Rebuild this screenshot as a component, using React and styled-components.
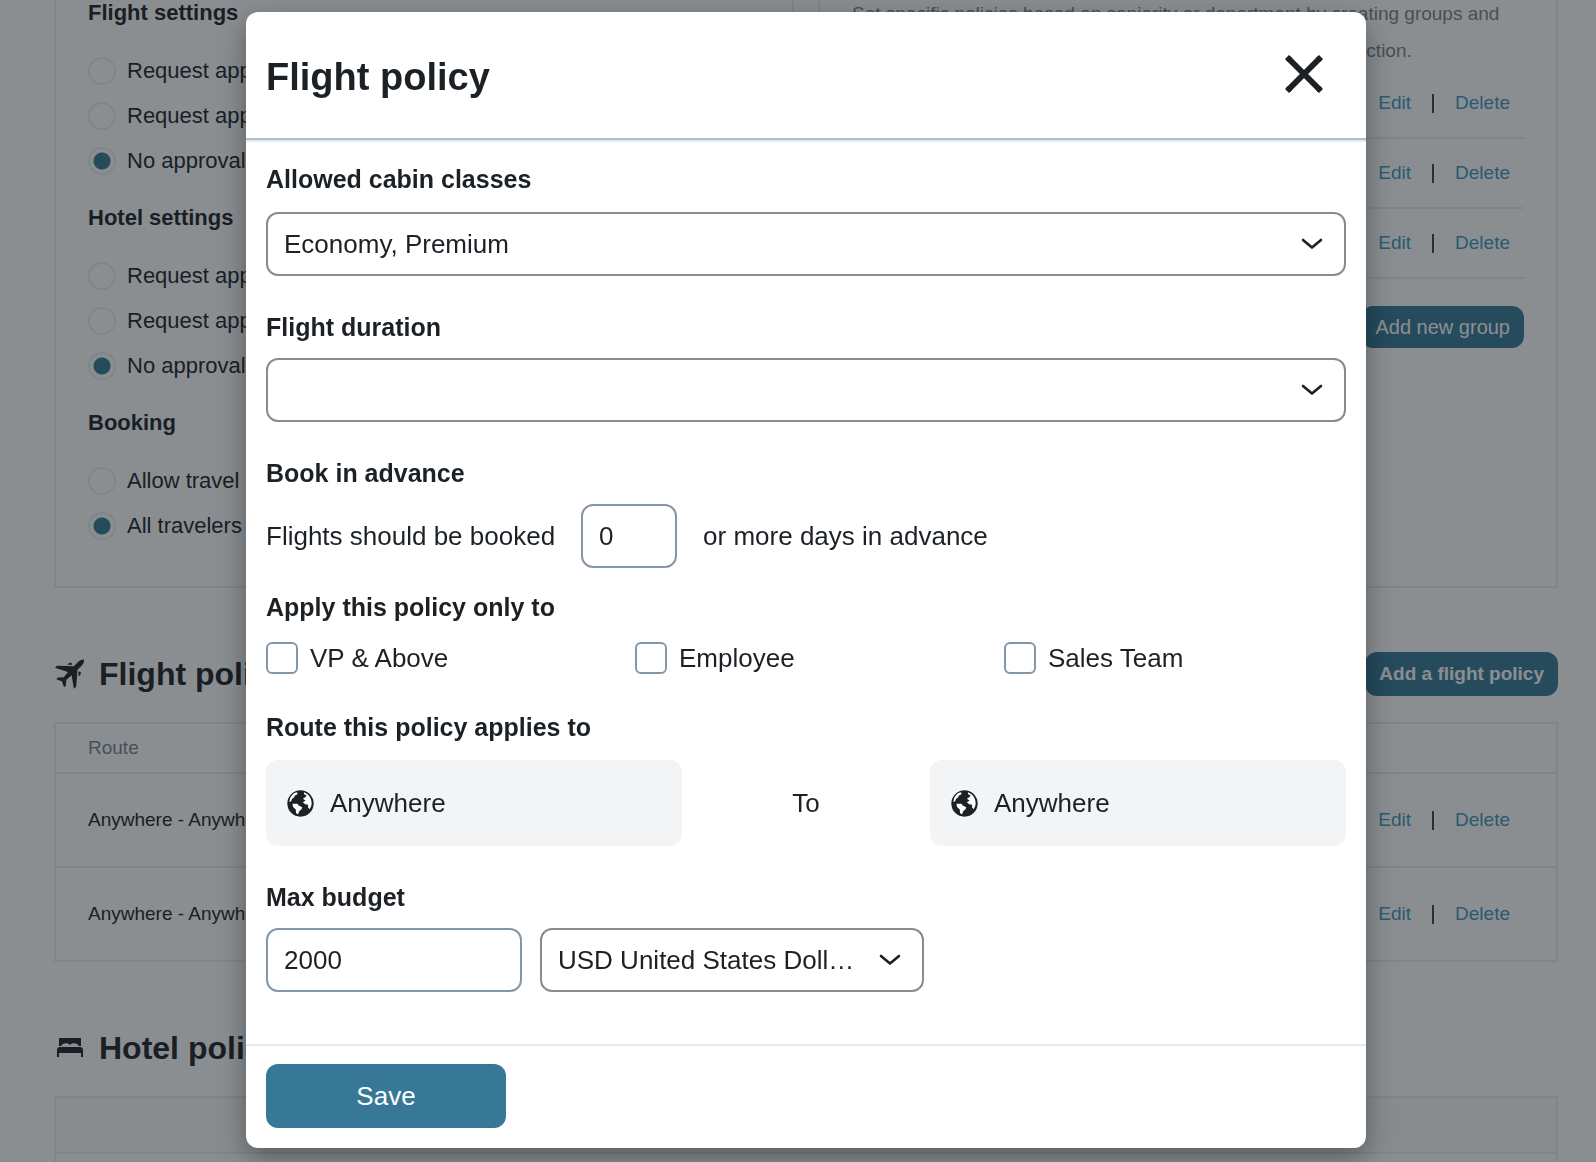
import React, { useState } from 'react';
import styled, { createGlobalStyle } from 'styled-components';

const GlobalStyle = createGlobalStyle`
  :root {
    --text-primary: #1c2126;
    --text-secondary: #75828f;
    --primary-color: #367896;
    --link-color: #4097bd;
    --line-color: #eaecee;
    --input-border: #8796a5;
    --select-border: #888c90;
  }

  * {
    box-sizing: border-box;
  }

  body {
    margin: 0;
    background: #ffffff;
    color: var(--text-primary);
    font-family: "Liberation Sans", Arial, sans-serif;
    font-size: 19px;
  }

  button, input, select {
    font-family: inherit;
    color: inherit;
  }
`;

const Page = styled.main`
  height: 100vh;
  overflow: hidden;
  padding: 0 38px 0 54px;
`;

/* ---------- settings behind the dialog ---------- */

// the page is scrolled a little, so the panels start above the window
const Panels = styled.div`
  display: grid;
  grid-template-columns: 1fr 1fr;
  gap: 24px;
  margin-top: -24px;
`;

const Panel = styled.section`
  border: 2px solid var(--line-color);
  padding: 0 32px 38px;
`;

const PanelHeading = styled.h3`
  margin: 0;
  font-size: 22px;
  line-height: 70px;
`;

const RadioLabel = styled.label`
  display: flex;
  align-items: center;
  gap: 11px;
  height: 45px;
  font-size: 22px;
`;

const Radio = styled.input`
  appearance: none;
  width: 28px;
  height: 28px;
  margin: 0;
  border: 2px solid var(--line-color);
  border-radius: 50%;
  background: transparent;

  &:checked {
    background: radial-gradient(circle, var(--primary-color) 8px, transparent 9px);
  }
`;

const Description = styled.p`
  margin: 0;
  padding-top: 17px;
  color: var(--text-secondary);
  line-height: 37px;
`;

const GroupRow = styled.div`
  display: flex;
  align-items: center;
  justify-content: space-between;
  height: 70px;
  padding-right: 14px;
  border-bottom: 2px solid var(--line-color);
`;

const Actions = styled.div`
  display: flex;
  align-items: center;
  justify-content: flex-end;
  gap: 21px;
`;

const Link = styled.a`
  color: var(--link-color);
  text-decoration: none;
`;

const Divider = styled.span`
  width: 2px;
  height: 19px;
  background: #3c4146;
`;

const PanelFooter = styled.div`
  display: flex;
  justify-content: flex-end;
  padding-top: 27px;
`;

const Button = styled.button`
  height: ${props => props.$bold ? '44px' : '42px'};
  padding: 0 14px;
  border: none;
  border-radius: 12px;
  background: var(--primary-color);
  color: #ffffff;
  font-size: ${props => props.$bold ? '19px' : '20px'};
  font-weight: ${props => props.$bold ? 'bold' : 'normal'};
  cursor: pointer;
`;

const SectionHeader = styled.div`
  display: flex;
  align-items: center;
  height: 44px;
  margin: 64px 0 26px;

  svg {
    width: 30px;
    height: 30px;
    margin-right: 15px;
  }
`;

const SectionTitle = styled.h2`
  flex: 1;
  margin: 0;
  font-size: 32px;
`;

const Table = styled.table`
  width: 100%;
  border-collapse: collapse;
  border: 2px solid var(--line-color);

  th {
    height: ${props => props.$tallHead ? '56px' : '50px'};
    color: var(--text-secondary);
    font-weight: normal;
    background: ${props => props.$tallHead ? '#fbfbfb' : 'transparent'};
  }

  td {
    height: 94px;
  }

  tr {
    border-bottom: 2px solid var(--line-color);
  }

  th, td {
    padding: 0 46px 0 32px;
    text-align: left;
  }
`;

/* ---------- dialog ---------- */

const Overlay = styled.div`
  position: fixed;
  inset: 0;
  display: flex;
  align-items: flex-start;
  justify-content: center;
  padding: 12px 16px 12px 32px;
  background: rgba(22, 29, 35, 0.5);
`;

const Modal = styled.div`
  width: 100%;
  max-width: 1120px;
  border-radius: 12px;
  background: #ffffff;
  box-shadow: 0 10px 28px rgba(0, 0, 0, 0.35);
`;

const ModalHeader = styled.header`
  display: flex;
  align-items: flex-start;
  justify-content: space-between;
  height: 128px;
  padding: 43px 43px 0 20px;
  border-bottom: 2px solid #b1bdc8;
`;

const ModalTitle = styled.h1`
  margin: 0;
  font-size: 38px;
  line-height: 44px;
`;

const CloseButton = styled.button`
  display: flex;
  padding: 0;
  border: none;
  background: none;
  cursor: pointer;

  svg {
    width: 38px;
    height: 38px;
  }
`;

const ModalBody = styled.form`
  display: flex;
  flex-direction: column;
  gap: 36px;
  padding: 22px 20px 52px;
  border-top: 2px solid #e5eaee;
  border-bottom: 2px solid #e5eaee;
  font-size: 26px;
`;

const ModalFooter = styled.footer`
  padding: 18px 20px 20px;
`;

const SaveButton = styled.button`
  width: 240px;
  height: 64px;
  border: none;
  border-radius: 12px;
  background: var(--primary-color);
  color: #ffffff;
  font-size: 26px;
  cursor: pointer;
`;

const Field = styled.div`
  display: flex;
  flex-direction: column;
  gap: ${props => props.$gap || 16}px;
`;

const FieldPair = styled.div`
  display: flex;
  flex-direction: column;
  gap: 24px;
`;

const Label = styled.label`
  font-size: 25px;
  font-weight: bold;
  line-height: 30px;
`;

const SelectWrap = styled.div`
  position: relative;
  width: ${props => props.$width || '100%'};

  svg {
    position: absolute;
    top: 26px;
    right: 23px;
    width: 22px;
    height: 12px;
    pointer-events: none;
  }
`;

const Select = styled.select`
  appearance: none;
  display: block;
  width: 100%;
  height: 64px;
  padding: 0 66px 0 16px;
  border: 2px solid var(--select-border);
  border-radius: 12px;
  background: #ffffff;
  font-size: 26px;
  text-overflow: ellipsis;
`;

const Input = styled.input`
  width: ${props => props.$width};
  height: 64px;
  padding: 0 16px;
  border: 2px solid var(--input-border);
  border-radius: 12px;
  background: #ffffff;
  font-size: 26px;
`;

const AdvanceRow = styled.div`
  display: flex;
  align-items: center;
  gap: 26px;
`;

const CheckGrid = styled.div`
  display: grid;
  grid-template-columns: repeat(3, 1fr);
  gap: 27px;
  padding-bottom: 2px;
`;

const CheckLabel = styled.label`
  display: flex;
  align-items: center;
  gap: 12px;
  height: 32px;
`;

const Checkbox = styled.input`
  appearance: none;
  width: 32px;
  height: 32px;
  margin: 0;
  border: 2px solid var(--input-border);
  border-radius: 6px;

  &:checked {
    background: var(--primary-color);
  }
`;

const RouteRow = styled.div`
  display: grid;
  grid-template-columns: 416fr 248fr 416fr;
  align-items: center;
  text-align: center;
`;

const Place = styled.button`
  display: flex;
  align-items: center;
  gap: 16px;
  height: 86px;
  padding: 0 21px;
  border: none;
  border-radius: 12px;
  background: #f3f4f6;
  font-size: 26px;
  cursor: pointer;

  svg {
    width: 27px;
    height: 27px;
  }
`;

const BudgetRow = styled.div`
  display: flex;
  gap: 18px;
`;

/* ---------- icons ---------- */

const CloseIcon = () => (
  <svg viewBox="0 0 38 38" aria-hidden="true">
    <path d="M3 3L35 35M35 3L3 35" stroke="currentColor" strokeWidth="6" strokeLinecap="butt" />
    <path d="M0 4L4 0L7 3L3 7ZM38 4L34 0L31 3L35 7ZM0 34L4 38L7 35L3 31ZM38 34L34 38L31 35L35 31Z" fill="currentColor" />
  </svg>
);

const ChevronIcon = () => (
  <svg viewBox="0 0 22 12" aria-hidden="true">
    <path d="M2 2L11 9.6L20 2" fill="none" stroke="currentColor" strokeWidth="2.6" strokeLinecap="round" strokeLinejoin="round" />
  </svg>
);

const PlaneIcon = () => (
  <svg viewBox="12 20 92 92" fill="currentColor" aria-hidden="true">
    <path d="M104 22C98 21 90 25 84 31L73 42L21 41L15 47L55 60L42 76L24 77L19 82L36 88L43 107L48 102L50 84L66 70L73 111L80 105L84 53L95 42C102 35 105 28 104 22Z" />
    <path d="M53 38C56 32 62 30 66 32L68 38ZM87 58L94 60C96 65 93 70 87 73Z" />
  </svg>
);

const BedIcon = () => (
  <svg viewBox="0 0 30 30" fill="currentColor" aria-hidden="true">
    <path d="M5 5H27V13H25C24 10 18 9 16 12C14 9 8 10 7 13H5Z" />
    <path d="M6 14H26Q29 14 29 17V24H27V20H5V24H3V17Q3 14 6 14Z" />
  </svg>
);

const GlobeIcon = () => (
  <svg viewBox="21 20 80 80" aria-hidden="true">
    <circle cx="61" cy="60" r="39" fill="currentColor" />
    <path d="M28 55C29 42 36 32 48 27L53 29L50 34L44 36L42 42L36 46L33 54ZM71 27C85 32 93 44 94 58C94 66 92 72 88 77L83 70L84 64L75 62L68 56L76 51L68 46L76 41L79 35L72 33ZM37 61L51 61L57 67L66 71L64 77L57 83L54 92L48 89L47 78L39 70Z" fill="#ffffff" />
  </svg>
);

/* ---------- data ---------- */

const settings = [
  {
    name: 'flight',
    title: 'Flight settings',
    options: ['Request approval for all', 'Request approval if out of policy', 'No approval'],
    initial: 2
  },
  {
    name: 'hotel',
    title: 'Hotel settings',
    options: ['Request approval for all', 'Request approval if out of policy', 'No approval'],
    initial: 2
  },
  {
    name: 'booking',
    title: 'Booking',
    options: ['Allow travel managers', 'All travelers'],
    initial: 1
  }
];

const groups = ['VP & Above', 'Employee', 'Sales Team'];

const flightPolicies = [
  { id: 1, route: 'Anywhere - Anywhere' },
  { id: 2, route: 'Anywhere - Anywhere' }
];

function RowActions() {
  return (
    <Actions>
      <Link href="#edit">Edit</Link>
      <Divider />
      <Link href="#delete">Delete</Link>
    </Actions>
  );
}

function SettingGroup({ setting }) {
  const [value, setValue] = useState(setting.initial);

  return (
    <div>
      <PanelHeading>{setting.title}</PanelHeading>
      {setting.options.map((option, index) => (
        <RadioLabel key={option}>
          <Radio
            type="radio"
            name={setting.name}
            checked={value === index}
            onChange={() => setValue(index)}
          />
          {option}
        </RadioLabel>
      ))}
    </div>
  );
}

function PolicyPage() {
  return (
    <Page>
      <Panels>
        <Panel>
          {settings.map(setting => (
            <SettingGroup key={setting.name} setting={setting} />
          ))}
        </Panel>
        <Panel>
          <Description>
            Set specific policies based on seniority or department by creating groups and
            then assigning travelers to each of the groups in their user section.
          </Description>
          {groups.map(group => (
            <GroupRow key={group}>
              <span>{group}</span>
              <RowActions />
            </GroupRow>
          ))}
          <PanelFooter>
            <Button type="button">Add new group</Button>
          </PanelFooter>
        </Panel>
      </Panels>

      <SectionHeader>
        <PlaneIcon />
        <SectionTitle>Flight policies</SectionTitle>
        <Button type="button" $bold>Add a flight policy</Button>
      </SectionHeader>
      <Table>
        <thead>
          <tr>
            <th colSpan={2}>Route</th>
          </tr>
        </thead>
        <tbody>
          {flightPolicies.map(policy => (
            <tr key={policy.id}>
              <td>{policy.route}</td>
              <td><RowActions /></td>
            </tr>
          ))}
        </tbody>
      </Table>

      <SectionHeader>
        <BedIcon />
        <SectionTitle>Hotel policies</SectionTitle>
      </SectionHeader>
      <Table $tallHead>
        <thead>
          <tr>
            <th />
          </tr>
        </thead>
        <tbody>
          <tr>
            <td />
          </tr>
        </tbody>
      </Table>
    </Page>
  );
}

function FlightPolicyModal() {
  const [days, setDays] = useState('0');
  const [budget, setBudget] = useState('2000');

  return (
    <Overlay>
      <Modal role="dialog" aria-modal="true" aria-labelledby="policy-title">
        <ModalHeader>
          <ModalTitle id="policy-title">Flight policy</ModalTitle>
          <CloseButton type="button" aria-label="Close">
            <CloseIcon />
          </CloseButton>
        </ModalHeader>

        <ModalBody id="policy-form">
          <Field $gap={18}>
            <Label htmlFor="cabin">Allowed cabin classes</Label>
            <SelectWrap>
              <Select id="cabin">
                <option>Economy, Premium</option>
              </Select>
              <ChevronIcon />
            </SelectWrap>
          </Field>

          <Field>
            <Label htmlFor="duration">Flight duration</Label>
            <SelectWrap>
              <Select id="duration">
                <option></option>
              </Select>
              <ChevronIcon />
            </SelectWrap>
          </Field>

          <FieldPair>
            <Field>
              <Label htmlFor="days">Book in advance</Label>
              <AdvanceRow>
                <span>Flights should be booked</span>
                <Input id="days" $width="96px" value={days} onChange={(e) => setDays(e.target.value)} />
                <span>or more days in advance</span>
              </AdvanceRow>
            </Field>

            <Field $gap={20} role="group" aria-labelledby="apply-label">
              <Label as="div" id="apply-label">Apply this policy only to</Label>
              <CheckGrid>
                {groups.map(group => (
                  <CheckLabel key={group}>
                    <Checkbox type="checkbox" />
                    {group}
                  </CheckLabel>
                ))}
              </CheckGrid>
            </Field>
          </FieldPair>

          <Field $gap={18} role="group" aria-labelledby="route-label">
            <Label as="div" id="route-label">Route this policy applies to</Label>
            <RouteRow>
              <Place type="button"><GlobeIcon />Anywhere</Place>
              <span>To</span>
              <Place type="button"><GlobeIcon />Anywhere</Place>
            </RouteRow>
          </Field>

          <Field>
            <Label htmlFor="budget">Max budget</Label>
            <BudgetRow>
              <Input id="budget" $width="256px" value={budget} onChange={(e) => setBudget(e.target.value)} />
              <SelectWrap $width="384px">
                <Select aria-label="Currency">
                  <option>USD United States Dollars</option>
                </Select>
                <ChevronIcon />
              </SelectWrap>
            </BudgetRow>
          </Field>
        </ModalBody>

        <ModalFooter>
          <SaveButton type="submit" form="policy-form">Save</SaveButton>
        </ModalFooter>
      </Modal>
    </Overlay>
  );
}

function App() {
  return (
    <>
      <GlobalStyle />
      <PolicyPage />
      <FlightPolicyModal />
    </>
  );
}

export default App;
